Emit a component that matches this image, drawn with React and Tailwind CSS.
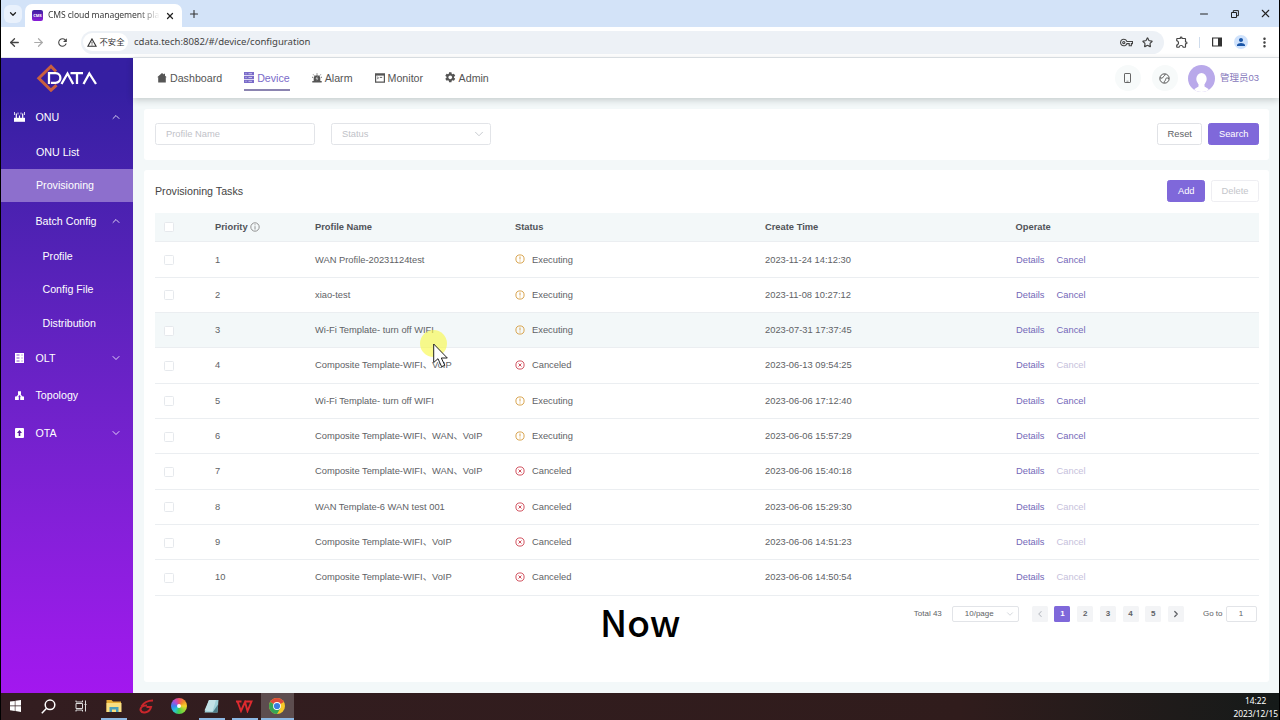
import React from "react";
import {
  ArrowLeft,
  ArrowRight,
  ChevronDown,
  ChevronLeft,
  ChevronRight,
  ChevronUp,
  Minus,
  Plus,
  Star,
  X,
} from "lucide-react";
import {
  MdOutlineExtension,
  MdOutlineVpnKey,
  MdPerson,
  MdRefresh,
  MdSettings,
  MdMoreVert,
} from "react-icons/md";

const tasks = [
  { name: "WAN Profile-20231124test", status: "Executing", time: "2023-11-24 14:12:30" },
  { name: "xiao-test", status: "Executing", time: "2023-11-08 10:27:12" },
  { name: "Wi-Fi Template- turn off WIFI", status: "Executing", time: "2023-07-31 17:37:45", hover: true },
  { name: "Composite Template-WIFI、VoIP", status: "Canceled", time: "2023-06-13 09:54:25" },
  { name: "Wi-Fi Template- turn off WIFI", status: "Executing", time: "2023-06-06 17:12:40" },
  { name: "Composite Template-WIFI、WAN、VoIP", status: "Executing", time: "2023-06-06 15:57:29" },
  { name: "Composite Template-WIFI、WAN、VoIP", status: "Canceled", time: "2023-06-06 15:40:18" },
  { name: "WAN Template-6 WAN test 001", status: "Canceled", time: "2023-06-06 15:29:30" },
  { name: "Composite Template-WIFI、VoIP", status: "Canceled", time: "2023-06-06 14:51:23" },
  { name: "Composite Template-WIFI、VoIP", status: "Canceled", time: "2023-06-06 14:50:54" },
];

const CmsIcon = () => (
  <div className="flex h-[11px] w-[11px] items-center justify-center rounded-[2px] bg-linear-to-b from-[#3d1fa0] to-[#8a1bd8] text-[4px] font-bold text-white">
    CMS
  </div>
);

const BrowserBar = () => (
  <div className="font-['Noto_Sans','Noto_Sans_CJK_SC',sans-serif]">
    <div className="flex h-[27px] items-center bg-[#d3e3f8] pl-[3px]">
      <div className="flex h-[18px] w-[18px] items-center justify-center rounded-[6px] bg-[#e9f1fc]">
        <ChevronDown size={10} strokeWidth={3} color="#222" />
      </div>
      <div className="ml-[3px] flex h-[23px] w-[157px] items-center self-end rounded-t-[7px] bg-white pl-[7px]">
        <CmsIcon />
        <span className="ml-[5px] w-[112px] bg-linear-to-r from-[#333] from-80% to-white bg-clip-text text-[8.6px] tracking-[-0.1px] whitespace-nowrap text-transparent">
          CMS cloud management pla
        </span>
        <X className="ml-[5px]" size={10} strokeWidth={3} color="#222" />
      </div>
      <Plus className="ml-[6px]" size={12} strokeWidth={2.2} color="#333" />
      <div className="ml-auto flex items-center gap-[20.5px] pr-[7px] text-[#222]">
        <Minus size={12} strokeWidth={2} />
        <svg width="8" height="8" viewBox="0 0 8 8" fill="none" stroke="currentColor">
          <path d="M.5 2.5h5v5h-5zM2.3 2.2V.6h5.1v5.1H5.8" />
        </svg>
        <X size={13} strokeWidth={2} />
      </div>
    </div>
    <div className="flex h-[31px] items-center border-b border-[#e2e6ea] bg-white pl-[7px] text-[#444]">
      <ArrowLeft size={13} strokeWidth={2.4} />
      <ArrowRight className="ml-[11px]" size={13} strokeWidth={2.2} color="#aaa" />
      <MdRefresh className="ml-[11px] text-[13px]" />
      <div className="ml-[12px] flex h-[23px] w-[1083px] items-center rounded-full bg-[#edf1f6] pl-[2px]">
        <div className="flex h-[18px] w-[45px] items-center justify-center gap-[3px] rounded-full bg-white text-[8.3px] whitespace-nowrap text-[#333]">
          <svg width="10" height="9" viewBox="0 0 10 9" fill="none" stroke="#333" strokeWidth="1.1">
            <path d="M5 .9 9.1 8.2H.9z" />
            <path d="M5 3.7v2M5 6.4v1" strokeWidth=".9" />
          </svg>
          不安全
        </div>
        <span className="ml-[6px] text-[9.55px] text-[#444]">cdata.tech:8082/#/device/configuration</span>
        <MdOutlineVpnKey className="ml-auto text-[13px]" />
        <Star className="mr-[11px] ml-[9px]" size={11} strokeWidth={2.6} />
      </div>
      <MdOutlineExtension className="ml-[11px] text-[14px]" />
      <div className="ml-[10px] h-[11px] w-px bg-[#cfdcec]" />
      <svg className="ml-[12px]" width="10" height="10" viewBox="0 0 10 10">
        <path d="M.6 1h8.8v8H.6z" fill="none" stroke="#333" strokeWidth="1.2" />
        <path d="M6 1h3.4v8H6z" fill="#333" />
      </svg>
      <div className="ml-[12px] flex h-[14px] w-[14px] items-center justify-center rounded-full bg-[#cfe2fc]">
        <MdPerson className="text-[12px] text-[#1a56a8]" />
      </div>
      <MdMoreVert className="ml-[9px] text-[15px]" />
    </div>
  </div>
);

const Logo = () => (
  <div className="flex h-[40px] items-center pl-[35px]">
    <svg width="62" height="28" viewBox="0 0 62 28" fill="none">
      <path d="m20 7.500-5-5.200L2.800 14.200 15 26.200l5.500-5" stroke="#c9603f" strokeWidth="3" />
      <path d="M13 20V9.200h6.500c6.500 0 6.500 9.600 0 9.600H15" stroke="#fff" strokeWidth="2.300" />
      <path d="m25.500 20 6-10.500L37.200 20M34.500 9.200h12.500M41 9.500V20M47.500 20l5.800-10.500L60 20" stroke="#fff" strokeWidth="2.300" />
    </svg>
  </div>
);

const OnuIcon = () => (
  <svg width="11" height="11" viewBox="0 0 11 11" fill="none" stroke="#fff">
    <path d="M0 6.800h11V10.800H0z" fill="#fff" stroke="none" />
    <path d="M2.300 2.500V7M8.700 2.500V7M5.500 4.500V7" strokeWidth="1.200" />
    <path d="M.5 1v3M4 1.500v2M7 1.500v2M10.500 1v3" strokeWidth=".8" />
  </svg>
);

const OltIcon = () => (
  <svg width="9" height="10" viewBox="0 0 9 10">
    <path d="M0 0h9v10H0z" fill="#fff" />
    <path d="M1.500 2h3M1.500 5h3M1.500 8h3M6.500 2h1M6.500 5h1M6.500 8h1" stroke="#6a1fc4" strokeWidth=".8" />
  </svg>
);

const TopologyIcon = () => (
  <svg width="9" height="9" viewBox="0 0 9 9" fill="#fff">
    <path d="M3 .3h3v3.400H3zM0 5.500h3.800V9H0zM5.200 5.500H9V9H5.200z" />
    <path d="M1.800 6.200 4.500 3l2.700 3.200" stroke="#fff" strokeWidth="1.200" fill="none" />
  </svg>
);

const OtaIcon = () => (
  <svg width="9" height="10" viewBox="0 0 9 10">
    <rect width="9" height="10" rx="1" fill="#fff" />
    <path d="M4.500 2 7 5H5.300v3H3.700V5H2z" fill="#5a1a9c" />
  </svg>
);

const MenuGroup = ({ icon, label, arrow }) => (
  <div className="flex h-[37.33px] items-center pr-[11px]">
    <div className="flex w-[34.500px] justify-center pl-[2px]">{icon}</div>
    <span className="flex-1">{label}</span>
    {arrow === "up" && <ChevronUp size={12} strokeWidth={1.600} />}
    {arrow === "down" && <ChevronDown size={12} strokeWidth={1.600} />}
  </div>
);

const MenuItem = ({ label, active, nested }) => (
  <div
    className={`flex h-[33.33px] items-center ${nested ? "pl-[41.5px]" : "pl-[35px]"} ${
      active ? "bg-[#8d6fcd]" : ""
    }`}
  >
    {label}
  </div>
);

const Sidebar = () => (
  <div className="w-[132px] shrink-0 bg-linear-to-b from-[#351fa2] from-5% to-[#a317ef] text-[10.67px] text-white">
    <Logo />
    <MenuGroup icon={<OnuIcon />} label="ONU" arrow="up" />
    <MenuItem label="ONU List" />
    <MenuItem label="Provisioning" active />
    <MenuGroup label="Batch Config" arrow="up" />
    <MenuItem label="Profile" nested />
    <MenuItem label="Config File" nested />
    <MenuItem label="Distribution" nested />
    <MenuGroup icon={<OltIcon />} label="OLT" arrow="down" />
    <MenuGroup icon={<TopologyIcon />} label="Topology" />
    <MenuGroup icon={<OtaIcon />} label="OTA" arrow="down" />
  </div>
);

const HomeIcon = () => (
  <svg width="10" height="10" viewBox="0 0 10 10" fill="currentColor">
    <path d="M5 0 .2 4.200h1V9.500h7.600V4.200h1L8 2.700V.8H6.800v.8z" />
  </svg>
);

const DeviceIcon = () => (
  <svg width="10" height="11" viewBox="0 0 10 11">
    <path d="M0 0h10v3.300H0zM0 3.900h10v3.200H0zM0 7.700h10V11H0z" fill="currentColor" />
    <path d="M1.500 1.700h1M1.500 5.500h1M1.500 9.300h1M4.500 1.700H8M4.500 5.500H8M4.500 9.300H8" stroke="#fff" strokeWidth=".6" />
  </svg>
);

const AlarmIcon = () => (
  <svg width="10" height="10" viewBox="0 0 10 10" fill="currentColor">
    <path d="M.3 7.900h9.400v1.700H.3zM1.700 7.900V5.500a3.300 3.300 0 0 1 6.600 0v2.400z" />
    <path d="M5 .3v1.500M1.200 1.400l1.200 1.300M8.800 1.400 7.600 2.700M0 4.300h1.200M8.800 4.300H10" stroke="currentColor" strokeWidth=".8" />
    <path d="m5.400 3.700-1.300 1.900h1.600l-.9 1.600" stroke="#fff" strokeWidth=".6" fill="none" />
  </svg>
);

const MonitorIcon = () => (
  <svg width="10" height="10" viewBox="0 0 10 10" fill="none" stroke="currentColor">
    <path d="M.6.8h8.800v8.400H.6z" strokeWidth="1.200" />
    <path d="M.6 1.800h8.800" strokeWidth="1.600" />
    <path d="m2.200 3.900 1.300 1-1.300 1M4.800 4.400h2.400" strokeWidth=".9" />
  </svg>
);

const NavItem = ({ icon, label, active }) => (
  <div
    className={`flex h-[25px] items-center gap-[3px] border-b-2 ${
      active ? "border-[#8b84b0] text-[#7a6bc9]" : "border-transparent text-[#555]"
    }`}
  >
    {icon}
    <span>{label}</span>
  </div>
);

const Header = () => (
  <div className="relative z-10 flex h-[40px] items-center bg-white pr-[20px] pl-[24px] shadow-[0_2px_7px_rgba(0,20,20,0.2)]">
    <div className="flex gap-[22px] pt-px text-[10.67px]">
      <NavItem icon={<HomeIcon />} label="Dashboard" />
      <NavItem icon={<DeviceIcon />} label="Device" active />
      <NavItem icon={<AlarmIcon />} label="Alarm" />
      <NavItem icon={<MonitorIcon />} label="Monitor" />
      <NavItem icon={<MdSettings className="-mr-px -ml-px text-[12.500px]" />} label="Admin" />
    </div>
    <div className="ml-auto flex items-center">
      <div className="flex h-[26px] w-[26px] items-center justify-center rounded-full bg-[#f7fafa]">
        <svg width="7" height="10" viewBox="0 0 7 10" fill="none" stroke="#555" strokeWidth=".9">
          <rect x=".5" y=".5" width="6" height="9" rx=".6" />
          <path d="M2.500 8.200h2" strokeWidth=".6" />
        </svg>
      </div>
      <div className="ml-[11px] flex h-[26px] w-[26px] items-center justify-center rounded-full bg-[#f7fafa]">
        <svg width="11" height="11" viewBox="0 0 11 11" fill="none" stroke="#555">
          <circle cx="5.500" cy="5.500" r="4.700" />
          <path d="M1 4.800c1.500.6 2.600.4 3-.6.4-1 1.700-.8 2.200-3.200M10 5.500c-1.600-1-3.600-.5-3.400 1 .1 1.300-1.400 1-1.400 3.300" />
        </svg>
      </div>
      <div className="ml-[10px] h-[27px] w-[27px] overflow-hidden rounded-full bg-[#b9a9ea]">
        <svg width="27" height="27" viewBox="0 0 27 27" fill="#fff">
          <ellipse cx="13.500" cy="14" rx="5.200" ry="6" />
          <path d="M10.500 17h6v4.500l4 2.500v3h-14v-3l4-2.500z" />
        </svg>
      </div>
      <span className="mt-px ml-[5px] text-[9.500px] whitespace-nowrap text-[#8577bb]">管理员03</span>
    </div>
  </div>
);

const Button = ({ label, variant }) => (
  <div
    className={`flex h-[22px] items-center justify-center rounded-[2.500px] border px-[9.500px] pt-[2px] text-[9.33px] ${
      variant === "primary"
        ? "border-[#7f68da] bg-[#7f68da] text-white"
        : variant === "disabled"
          ? "border-[#eeeef2] bg-white text-[#c3c5ca]"
          : "border-[#e0e2e6] bg-white text-[#606266]"
    }`}
  >
    {label}
  </div>
);

const Filters = () => (
  <div className="flex h-[51px] items-center rounded-[3px] bg-white pr-[10px] pb-px pl-[11px]">
    <div className="flex h-[22px] w-[160px] items-center rounded-[2.500px] border border-[#e2e4e8] pt-[2px] pl-[10px] text-[9.33px] text-[#bfc2c8]">
      Profile Name
    </div>
    <div className="ml-[16px] flex h-[22px] w-[160px] items-center justify-between rounded-[2.500px] border border-[#e2e4e8] pr-[4px] pl-[10px] text-[9.33px] text-[#bfc2c8]">
      <span className="pt-[2px]">Status</span>
      <ChevronDown size={14} strokeWidth={1.500} />
    </div>
    <div className="ml-auto flex gap-[6px]">
      <Button label="Reset" />
      <Button label="Search" variant="primary" />
    </div>
  </div>
);

const Checkbox = () => (
  <div className="-mt-px ml-[8.500px] h-[10px] w-[10px] rounded-[1.500px] border border-[#e6e9ed] bg-white" />
);

const StatusIcon = ({ status }) =>
  status === "Executing" ? (
    <svg className="-mt-[2px]" width="10" height="10" viewBox="0 0 10 10" fill="none" stroke="#d9a550">
      <circle cx="5" cy="5" r="4.100" />
      <path d="M5 2.500v3M5 6.500v1" />
    </svg>
  ) : (
    <svg className="-mt-[2px]" width="10" height="10" viewBox="0 0 10 10" fill="none" stroke="#d2525f">
      <circle cx="5" cy="5" r="4.100" />
      <path d="m3.500 3.500 3 3M6.500 3.500l-3 3" />
    </svg>
  );

const TaskRow = ({ task, index }) => (
  <div
    className={`grid h-[35.33px] grid-cols-[50px_110px_200px_250px_251px_1fr] items-center border-b border-[#ebeef1] pt-[2px] ${
      task.hover ? "bg-[#f3f8f9]" : ""
    }`}
  >
    <Checkbox />
    <span className="pl-[10px]">{index + 1}</span>
    <span className="whitespace-nowrap">{task.name}</span>
    <span className="flex items-center gap-[7px]">
      <StatusIcon status={task.status} />
      {task.status}
    </span>
    <span>{task.time}</span>
    <span className="flex gap-[12px] text-[#7468b8]">
      <span>Details</span>
      <span className={task.status === "Canceled" ? "text-[#c6c1dc]" : ""}>Cancel</span>
    </span>
  </div>
);

const PageButton = ({ children, active, disabled }) => (
  <div
    className={`flex h-[16px] w-[16px] items-center justify-center rounded-[1.500px] ${
      active ? "bg-[#7f68da] text-white" : disabled ? "bg-[#f3f4f6] text-[#b9bcc3]" : "bg-[#f3f4f6] text-[#606266]"
    }`}
  >
    {children}
  </div>
);

const Pagination = () => (
  <div className="mt-[9px] flex h-[18px] items-center justify-end pr-[2.500px] text-[8px] text-[#606266]">
    <span>Total 43</span>
    <div className="ml-[10px] flex h-[16px] w-[67px] items-center justify-between rounded-[2px] border border-[#e2e4e8] pr-[3px] pl-[12px]">
      10/page
      <ChevronDown size={10} strokeWidth={1.600} color="#c0c4cc" />
    </div>
    <div className="ml-[13px] flex gap-[6.700px] font-bold">
      <PageButton disabled>
        <ChevronLeft size={10} strokeWidth={2.500} />
      </PageButton>
      <PageButton active>1</PageButton>
      <PageButton>2</PageButton>
      <PageButton>3</PageButton>
      <PageButton>4</PageButton>
      <PageButton>5</PageButton>
      <PageButton>
        <ChevronRight size={10} strokeWidth={3} />
      </PageButton>
    </div>
    <span className="ml-[19px]">Go to</span>
    <div className="ml-[3px] flex h-[16px] w-[31px] items-center justify-center rounded-[2px] border border-[#e2e4e8]">
      1
    </div>
  </div>
);

const TaskPanel = () => (
  <div className="mt-[10px] h-[512px] rounded-[3px] bg-white pt-[10px] pr-[10px] pl-[11px]">
    <div className="flex h-[22px] items-center justify-between">
      <span className="text-[10.67px] text-[#444]">Provisioning Tasks</span>
      <div className="flex gap-[6px]">
        <Button label="Add" variant="primary" />
        <Button label="Delete" variant="disabled" />
      </div>
    </div>
    <div className="mt-[11px] text-[9.33px] text-[#606266]">
      <div className="grid h-[29.330px] grid-cols-[50px_110px_200px_250px_250.500px_1fr] items-center border-b border-[#ebeef1] bg-[#f3f8f9] font-bold text-[#505358]">
        <Checkbox />
        <span className="flex items-center gap-[2px] pt-px pl-[10px]">
          Priority
          <svg className="-mt-[2px]" width="10" height="10" viewBox="0 0 10 10" fill="none" stroke="#888" strokeWidth=".9">
            <circle cx="5" cy="5" r="4.200" />
            <path d="M5 2.300v1M5 4.200v3.300" />
          </svg>
        </span>
        <span className="pt-px">Profile Name</span>
        <span className="pt-px">Status</span>
        <span className="pt-px">Create Time</span>
        <span className="pt-px">Operate</span>
      </div>
      {tasks.map((task, index) => (
        <TaskRow key={index} task={task} index={index} />
      ))}
    </div>
    <Pagination />
  </div>
);

const TaskbarItem = ({ children, open, active }) => (
  <div className={`flex w-[32.700px] justify-center ${active ? "bg-[#5d4d4f]" : ""}`}>
    <div
      className={`flex h-[27px] items-center justify-center border-b-2 pt-px ${
        active ? "w-full border-[#8db8e4]" : open ? "w-[26px] border-[#8db8e4]" : "w-[26px] border-transparent"
      }`}
    >
      {children}
    </div>
  </div>
);

const Taskbar = () => (
  <div className="flex h-[27px] items-center bg-linear-to-r from-[#331d20] via-[#301c1c] via-75% to-[#151a19]">
    <div className="-ml-[1.500px] flex">
      <TaskbarItem>
        <svg width="11" height="12" viewBox="0 0 11 12" fill="#fff">
          <path d="m0 1.600 4.800-.7v4.700H0zM5.400.8 11 0v5.600H5.400zM0 6.200h4.800v4.700L0 10.200zM5.400 6.200H11V12l-5.600-.9z" />
        </svg>
      </TaskbarItem>
      <TaskbarItem>
        <svg width="15" height="15" viewBox="0 0 15 15" fill="none" stroke="#fff" strokeWidth="1.500">
          <circle cx="9" cy="5.800" r="4.800" />
          <path d="M5.600 9.300.8 14.200" />
        </svg>
      </TaskbarItem>
      <TaskbarItem>
        <svg width="12" height="12" viewBox="0 0 12 12" fill="none" stroke="#ddd">
          <path d="M1 3.500h6.500v5H1zM1 .5v1.500h6.500V.5M1 11.500V10h6.500v1.500M10.500.5v11M9.500 4.500h2" />
        </svg>
      </TaskbarItem>
      <TaskbarItem open>
        <svg width="16" height="14" viewBox="0 0 16 14">
          <path d="M.5 1h5l1.500 1.500h8V13H.5z" fill="#e5ae36" />
          <path d="M.5 4h15v9H.5z" fill="#f8df82" />
          <path d="M3.500 13V8h9v5h-2.500v-2.500H6V13z" fill="#4a9fbd" />
        </svg>
      </TaskbarItem>
      <TaskbarItem>
        <svg width="15" height="15" viewBox="0 0 15 15" fill="none" stroke="#c9262b" strokeWidth="2">
          <path d="M14 1.500C8 1.500 4.500 4 2.500 7.500M8 6.500C3.500 6 .8 9 1.700 11.500c1.500 3.500 8.800 2.500 10.300-3.500H7.500" />
        </svg>
      </TaskbarItem>
      <TaskbarItem>
        <div className="flex h-[16px] w-[16px] items-center justify-center rounded-full bg-[conic-gradient(#f0506a,#f08a2c,#f5d328,#8fd63a,#47cf4b,#27c4d4,#3d7ff0,#b24bd6,#f0506a)]">
          <div className="h-[4px] w-[4px] rounded-full bg-white" />
        </div>
      </TaskbarItem>
      <TaskbarItem open>
        <svg width="15" height="15" viewBox="0 0 15 15">
          <path d="M5 1h9.500l-1 12.500H.5z" fill="#9fd0d8" />
          <path d="M5 1 .5 11.500l8 1L12 1z" fill="#c3e2e7" />
          <path d="m8.500 13.500 5.500-8-.5 8z" fill="#4d7c88" />
        </svg>
      </TaskbarItem>
      <TaskbarItem open>
        <svg width="17" height="13" viewBox="0 0 17 13" fill="none" stroke="#dd2a2f" strokeWidth="1.900">
          <path d="M0 1.500h5.500M1.500 1.500 5 11l4-9 2.500 9L15.500 1.500H8.500" />
        </svg>
      </TaskbarItem>
      <TaskbarItem active>
        <svg width="16" height="16" viewBox="0 0 16 16">
          <circle cx="8" cy="8" r="8" fill="#f7c928" />
          <path d="M8 8 1.100 4A8 8 0 0 1 14.900 4z" fill="#de4b3b" />
          <path d="M8 8 1.100 4A8 8 0 0 0 8 16l3.500-6z" fill="#36a556" />
          <circle cx="8" cy="8" r="3.900" fill="#fff" />
          <circle cx="8" cy="8" r="3.100" fill="#3b7de0" />
        </svg>
      </TaskbarItem>
    </div>
    <div className="ml-auto flex flex-col items-center gap-[3px] pt-px pr-[1px] font-['Noto_Sans',sans-serif] text-[8.400px] leading-[10px] text-white">
      <span>14:22</span>
      <span>2023/12/15</span>
    </div>
  </div>
);

const Cursor = () => (
  <div className="absolute top-[330px] left-[418.500px]">
    <div className="h-[27px] w-[27px] rounded-full bg-[#f8f840]/60" />
    <svg className="absolute top-[13px] left-[13px]" width="16" height="26" viewBox="0 0 16 26">
      <path d="M.7 1v18.500l4.300-3.800 3.600 8 3.200-1.400-3.500-7.300h6z" fill="#fff" stroke="#222" />
    </svg>
  </div>
);

const App = () => {
  return (
    <div className="relative h-[720px] w-[1280px] overflow-hidden border-x border-black bg-white font-['Liberation_Sans','Noto_Sans_CJK_SC',sans-serif]">
      <BrowserBar />
      <div className="flex h-[635px]">
        <Sidebar />
        <div className="flex-1 bg-[#f3f8f9]">
          <Header />
          <div className="pt-[11px] pr-[10px] pl-[11px]">
            <Filters />
            <TaskPanel />
          </div>
        </div>
      </div>
      <Taskbar />
      <Cursor />
      <div className="absolute top-[593px] left-[599px] font-['Noto_Sans_CJK_SC',sans-serif] text-[37px] leading-[56px] font-medium text-black">
        Now
      </div>
    </div>
  );
};

export default App;
